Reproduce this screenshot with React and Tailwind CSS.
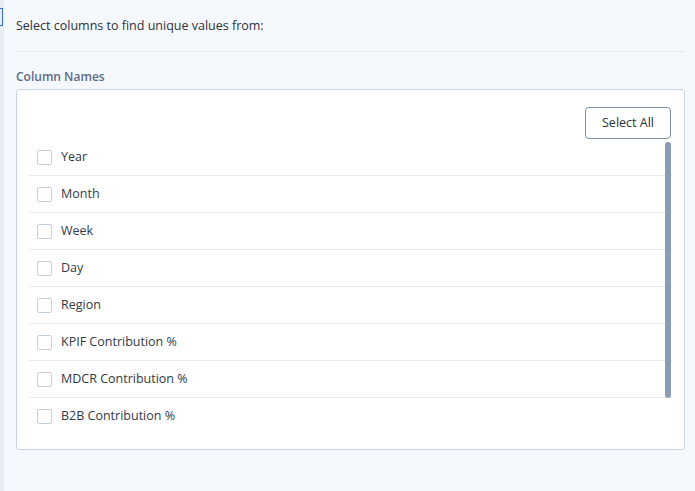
import React from 'react';

const COLUMNS = [
  'Year',
  'Month',
  'Week',
  'Day',
  'Region',
  'KPIF Contribution %',
  'MDCR Contribution %',
  'B2B Contribution %',
];

function ColumnRow({ name, last }) {
  return (
    <label
      className={`flex h-[37px] items-center pl-2 cursor-pointer ${last ? '' : 'border-b border-[#e6ebf3]'}`}
    >
      <span className="h-[15px] w-[15px] rounded-[2px] border border-[#c6cfe0] bg-white shrink-0" />
      <span className="ml-[9px] text-[12.5px] text-[#333a45]">{name}</span>
    </label>
  );
}

export default function App() {
  return (
    <div
      className="flex h-[491px] w-[695px] bg-[#f5f8fd] overflow-hidden"
      style={{ fontFamily: '"Open Sans", "Noto Sans", sans-serif' }}
    >
      <div className="w-[4px] shrink-0 bg-[#e8edf6] pt-[8px]">
        <div className="h-[18px] w-[3px] border border-l-0 border-[#3a6fd8]" />
      </div>
      <div className="flex flex-1 flex-col pl-[12px] pr-[10px]">
        <div className="flex h-[52px] items-center border-b border-[#e4e9f1] pt-[1px] text-[12.5px] text-[#2c313a]">
          Select columns to find unique values from:
        </div>
        <div className="mt-[16px] text-[12px] font-semibold text-[#5d6b84]">Column Names</div>
        <div className="mt-[3px] h-[361px] rounded-[3px] border border-[#c9d2e1] bg-white pl-[12px] pr-[11px] pt-[17px]">
          <div className="flex justify-end pr-[2px]">
            <button
              type="button"
              className="h-[32px] w-[86px] rounded-[4px] border border-[#8090ab] bg-white text-[12.5px] text-[#2c313a]"
            >
              Select All
            </button>
          </div>
          <div className="relative">
            {COLUMNS.map((c, i) => (
              <ColumnRow key={c} name={c} last={i === COLUMNS.length - 1} />
            ))}
            <div className="absolute right-[2px] top-[3px] h-[256px] w-[6px] rounded-full bg-[#8a9bb8]" />
          </div>
        </div>
      </div>
    </div>
  );
}
